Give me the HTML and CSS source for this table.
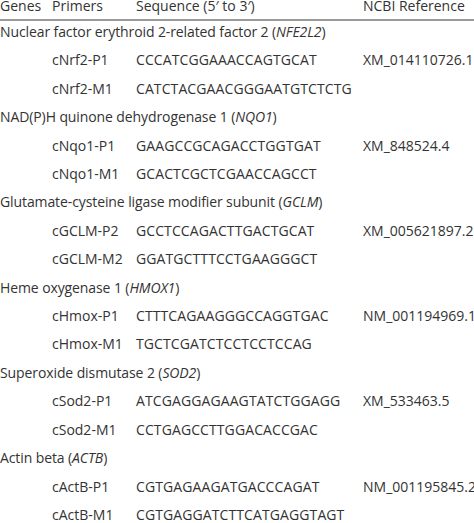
FILE: index.html
```html
<!DOCTYPE html>
<html>
<head>
<meta charset="utf-8">
<link rel="stylesheet" href="styles.css">
</head>
<body>
<div class="table">
  <div class="head">
    <div class="c1">Genes</div>
    <div class="c2">Primers</div>
    <div class="c3">Sequence (5′ to 3′)</div>
    <div class="c4">NCBI Reference</div>
  </div>
  <div class="body">
    <div class="title">Nuclear factor erythroid 2-related factor 2 (<i>NFE2L2</i>)</div>
    <div class="c1"></div><div class="c2">cNrf2-P1</div><div class="c3 seq">CCCATCGGAAACCAGTGCAT</div><div class="c4">XM_014110726.1</div>
    <div class="c1"></div><div class="c2">cNrf2-M1</div><div class="c3 seq">CATCTACGAACGGGAATGTCTCTG</div><div class="c4"></div>

    <div class="title">NAD(P)H quinone dehydrogenase 1 (<i>NQO1</i>)</div>
    <div class="c1"></div><div class="c2">cNqo1-P1</div><div class="c3 seq">GAAGCCGCAGACCTGGTGAT</div><div class="c4">XM_848524.4</div>
    <div class="c1"></div><div class="c2">cNqo1-M1</div><div class="c3 seq">GCACTCGCTCGAACCAGCCT</div><div class="c4"></div>

    <div class="title">Glutamate-cysteine ligase modifier subunit (<i>GCLM</i>)</div>
    <div class="c1"></div><div class="c2">cGCLM-P2</div><div class="c3 seq">GCCTCCAGACTTGACTGCAT</div><div class="c4">XM_005621897.2</div>
    <div class="c1"></div><div class="c2">cGCLM-M2</div><div class="c3 seq">GGATGCTTTCCTGAAGGGCT</div><div class="c4"></div>

    <div class="title">Heme oxygenase 1 (<i>HMOX1</i>)</div>
    <div class="c1"></div><div class="c2">cHmox-P1</div><div class="c3 seq">CTTTCAGAAGGGCCAGGTGAC</div><div class="c4">NM_001194969.1</div>
    <div class="c1"></div><div class="c2">cHmox-M1</div><div class="c3 seq">TGCTCGATCTCCTCCTCCAG</div><div class="c4"></div>

    <div class="title">Superoxide dismutase 2 (<i>SOD2</i>)</div>
    <div class="c1"></div><div class="c2">cSod2-P1</div><div class="c3 seq">ATCGAGGAGAAGTATCTGGAGG</div><div class="c4">XM_533463.5</div>
    <div class="c1"></div><div class="c2">cSod2-M1</div><div class="c3 seq">CCTGAGCCTTGGACACCGAC</div><div class="c4"></div>

    <div class="title">Actin beta (<i>ACTB</i>)</div>
    <div class="c1"></div><div class="c2">cActB-P1</div><div class="c3 seq">CGTGAGAAGATGACCCAGAT</div><div class="c4">NM_001195845.2</div>
    <div class="c1"></div><div class="c2">cActB-M1</div><div class="c3 seq">CGTGAGGATCTTCATGAGGTAGT</div><div class="c4"></div>
  </div>
</div>
</body>
</html>
```
FILE: styles.css
```css
html, body {
  margin: 0;
  padding: 0;
  background: #ffffff;
}
body {
  font-family: "Open Sans", "DejaVu Sans", sans-serif;
  font-size: 14px;
  color: #333333;
  overflow: hidden;
}
.table {
  width: 474px;
}
.head, .body {
  display: grid;
  grid-template-columns: 52px 84px 227px 1fr;
  white-space: nowrap;
}
.head {
  line-height: 11px;
  padding-bottom: 8px;
  border-bottom: 2px solid #9a9a9a;
}
.body {
  margin-top: -3px;
  grid-auto-rows: 28.41px;
  line-height: 28.41px;
}
.title {
  grid-column: 1 / -1;
  letter-spacing: -0.1px;
}
.title i {
  font-style: italic;
}
.seq {
  letter-spacing: 0.1px;
}
.c4 {
  overflow: hidden;
}
```
